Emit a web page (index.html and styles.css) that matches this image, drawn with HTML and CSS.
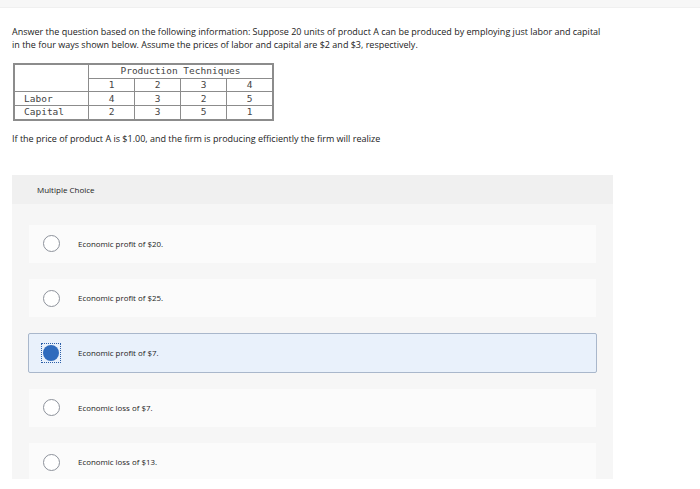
FILE: index.html
```html
<!DOCTYPE html>
<html lang="en">
<head>
    <meta charset="UTF-8">
    <title>Multiple Choice</title>
    <link rel="stylesheet" href="styles.css">
</head>
<body>
    <div class="top-strip"></div>

    <div class="question">
        <p class="prompt">Answer the question based on the following information: Suppose 20 units of product A can be produced by employing just labor and capital<br>in the four ways shown below. Assume the prices of labor and capital are $2 and $3, respectively.</p>

        <table class="techniques">
            <tr>
                <td rowspan="2" class="corner"></td>
                <td colspan="4" class="center">Production Techniques</td>
            </tr>
            <tr>
                <td class="num">1</td>
                <td class="num">2</td>
                <td class="num">3</td>
                <td class="num">4</td>
            </tr>
            <tr>
                <td class="label">Labor</td>
                <td class="num">4</td>
                <td class="num">3</td>
                <td class="num">2</td>
                <td class="num">5</td>
            </tr>
            <tr>
                <td class="label">Capital</td>
                <td class="num">2</td>
                <td class="num">3</td>
                <td class="num">5</td>
                <td class="num">1</td>
            </tr>
        </table>

        <p class="prompt">If the price of product A is $1.00, and the firm is producing efficiently the firm will realize</p>
    </div>

    <div class="choice-panel">
        <div class="choice-header">Multiple Choice</div>
        <div class="choice-list">
            <div class="choice">
                <span class="radio"></span>
                <span class="choice-text">Economic profit of $20.</span>
            </div>
            <div class="choice">
                <span class="radio"></span>
                <span class="choice-text">Economic profit of $25.</span>
            </div>
            <div class="choice selected">
                <span class="radio-focus"><span class="radio checked"></span></span>
                <span class="choice-text">Economic profit of $7.</span>
            </div>
            <div class="choice">
                <span class="radio"></span>
                <span class="choice-text">Economic loss of $7.</span>
            </div>
            <div class="choice">
                <span class="radio"></span>
                <span class="choice-text">Economic loss of $13.</span>
            </div>
        </div>
    </div>
</body>
</html>
```

FILE: styles.css
```css
body {
    font-family: "Open Sans", Lato, Arial, sans-serif;
    margin: 0;
    padding: 0;
    background-color: #fff;
    color: #222;
}

.top-strip {
    height: 7px;
    background-color: #f7f7f7;
    border-bottom: 1px solid #f0f0f0;
}

.question {
    padding: 0 12px;
}

.prompt {
    margin: 0;
    font-size: 9px;
    line-height: 13px;
    color: #222;
}

.question .prompt:first-child {
    padding-top: 17px;
}

.techniques {
    margin: 12px 0 11px 1px;
    border-collapse: collapse;
    border: 2px solid #8c8c8c;
    font-family: "DejaVu Sans Mono", monospace;
    font-size: 9.5px;
    color: #444;
}

.techniques td {
    border: 1px solid #8c8c8c;
    height: 12.7px;
    line-height: 12px;
    padding: 0;
}

.techniques .corner {
    width: 73px;
}

.techniques .num {
    width: 45px;
    text-align: center;
}

.techniques .center {
    text-align: center;
}

.techniques .label {
    padding-left: 9px;
    width: 64px;
}

.choice-panel {
    margin: 30px 0 0 12px;
    width: 601px;
    height: 304px;
    overflow: hidden;
    background-color: #f6f6f6;
}

.choice-header {
    height: 29px;
    line-height: 29px;
    padding-left: 25px;
    background-color: #f0f0f0;
    font-size: 8px;
    color: #222;
}

.choice-list {
    padding: 20px 16px 0;
    display: flex;
    flex-direction: column;
    gap: 14.6px;
}

.choice {
    height: 38px;
    border: 1px solid #f6f6f6;
    background-color: #fbfbfb;
    display: flex;
    align-items: center;
}

.choice.selected {
    background-color: #e9f1fb;
    border-color: #a9b7cb;
    border-radius: 2px;
}

.radio {
    width: 15px;
    height: 15px;
    margin-left: 14px;
    border: 1.3px solid #8d929b;
    border-radius: 50%;
    background-color: #fff;
    flex-shrink: 0;
}

.radio-focus {
    margin-left: 12px;
    width: 20px;
    height: 20px;
    border: 1px dotted #2c5fa8;
    box-sizing: border-box;
    display: flex;
    align-items: center;
    justify-content: center;
    flex-shrink: 0;
}

.radio.checked {
    margin-left: 0;
    width: 16px;
    height: 16px;
    border: none;
    background-color: #2f6bbd;
}

.choice-text {
    margin-left: 18px;
    font-size: 7.9px;
    color: #222;
}

.selected .choice-text {
    margin-left: 17px;
}
```
